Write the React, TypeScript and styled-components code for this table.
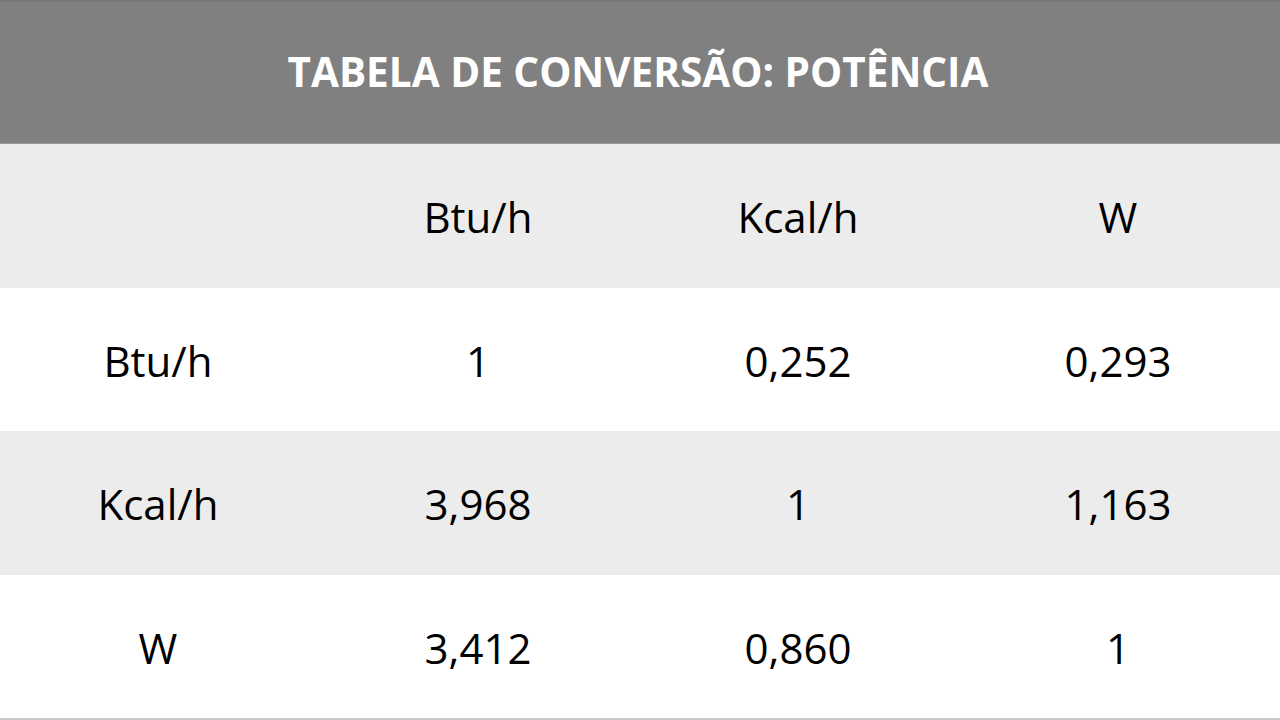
import React from 'react';
import styled, { createGlobalStyle } from 'styled-components';

const GlobalStyle = createGlobalStyle`
  html, body {
    margin: 0;
    padding: 0;
    background: #ffffff;
  }
  body {
    font-family: 'Open Sans', 'Liberation Sans', sans-serif;
    color: #000000;
  }
`;

const units = ['Btu/h', 'Kcal/h', 'W'];

const rows = [
  { unit: 'Btu/h', values: ['1', '0,252', '0,293'] },
  { unit: 'Kcal/h', values: ['3,968', '1', '1,163'] },
  { unit: 'W', values: ['3,412', '0,860', '1'] },
];

export default function App() {
  return (
    <Root>
      <GlobalStyle />
      <Title>TABELA DE CONVERSÃO: POTÊNCIA</Title>
      <Table>
        <Row $shade>
          <Cell />
          {units.map((u) => (
            <Cell key={u}>{u}</Cell>
          ))}
        </Row>
        {rows.map((row, i) => (
          <Row key={row.unit} $shade={i % 2 === 1}>
            <Cell>{row.unit}</Cell>
            {row.values.map((v, j) => (
              <Cell key={j}>{v}</Cell>
            ))}
          </Row>
        ))}
      </Table>
    </Root>
  );
}

const Root = styled.div`
  width: 1280px;
  height: 720px;
  display: flex;
  flex-direction: column;
  overflow: hidden;
`;

const Title = styled.div`
  height: 144px;
  box-sizing: border-box;
  background: #808080;
  border-top: 2px solid #787878;
  border-bottom: 1px solid #9a9a9a;
  color: #ffffff;
  font-size: 40.5px;
  font-weight: 700;
  display: flex;
  align-items: center;
  justify-content: center;
  padding-right: 4px;
  padding-bottom: 2px;
`;

const Table = styled.div`
  display: flex;
  flex-direction: column;
  border-bottom: 2px solid #c8c8c8;
  box-sizing: border-box;
  height: 576px;
`;

const Row = styled.div<{ $shade?: boolean }>`
  flex: 1;
  display: grid;
  grid-template-columns: repeat(4, 320px);
  background: ${(p) => (p.$shade ? '#ececec' : '#ffffff')};
`;

const Cell = styled.div`
  display: flex;
  align-items: center;
  justify-content: center;
  font-size: 42px;
  padding-top: 2px;
  padding-right: 4px;
`;
